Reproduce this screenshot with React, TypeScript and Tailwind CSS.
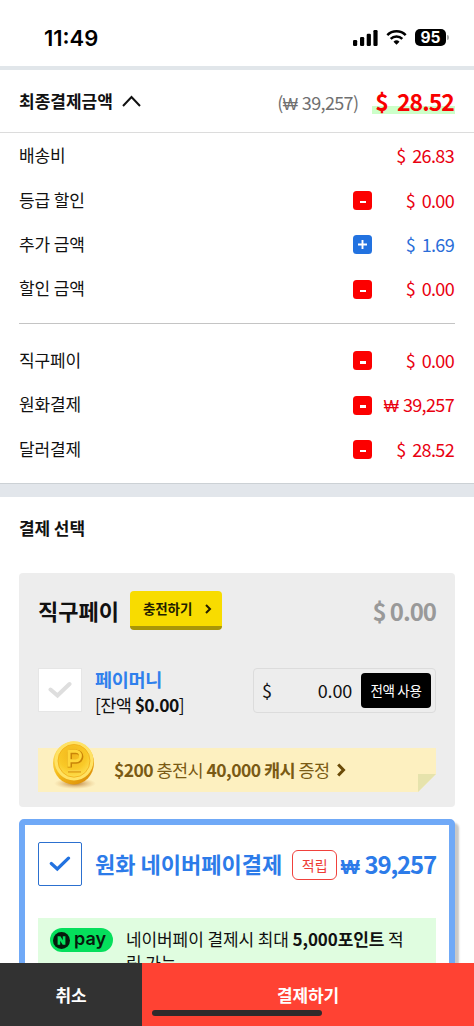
import React from 'react';

type Sign = 'minus' | 'plus' | null;

interface RowData {
  label: string;
  currency: string;
  value: string;
  sign: Sign;
}

const feeRows: RowData[] = [
  { label: '배송비', currency: '$', value: '26.83', sign: null },
  { label: '등급 할인', currency: '$', value: '0.00', sign: 'minus' },
  { label: '추가 금액', currency: '$', value: '1.69', sign: 'plus' },
  { label: '할인 금액', currency: '$', value: '0.00', sign: 'minus' },
];

const payRows: RowData[] = [
  { label: '직구페이', currency: '$', value: '0.00', sign: 'minus' },
  { label: '원화결제', currency: '₩', value: '39,257', sign: 'minus' },
  { label: '달러결제', currency: '$', value: '28.52', sign: 'minus' },
];

function SignBadge({ sign }: { sign: 'minus' | 'plus' }) {
  return sign === 'minus' ? (
    <span className="mt-[2px] flex h-[19px] w-[19px] items-center justify-center rounded-[3.5px] bg-[#fc0000]">
      <span className="mt-[3px] h-[2.5px] w-[6px] bg-white" />
    </span>
  ) : (
    <span className="mt-[2px] flex h-[19px] w-[19px] items-center justify-center rounded-[3.5px] bg-[#2272e0]">
      <svg width="11" height="11" viewBox="0 0 11 11" stroke="white" strokeWidth="1.9">
        <path d="M5.5 1v9M1 5.5h9" />
      </svg>
    </span>
  );
}

function Won({ className = '' }: { className?: string }) {
  return <span className={`font-['Liberation_Sans'] leading-none tracking-normal ${className}`}>₩</span>;
}

function AmountRow({ row }: { row: RowData }) {
  const color = row.sign === 'plus' ? 'text-[#2a6dd8]' : 'text-[#e90010]';
  return (
    <div className="flex h-[44.4px] items-center text-[17px] leading-[24px]">
      <span className="tracking-[-0.1px] text-[#111]">{row.label}</span>
      <span className="flex-1" />
      {row.sign && <SignBadge sign={row.sign} />}
      <span className={`flex w-[83px] items-baseline justify-end pr-[1px] text-[18px] ${color}`}>
        {row.currency === '$' ? <span className="mr-[6px]">$</span> : <Won className="mr-[4px] text-[16px]" />}
        <span className="tracking-[-0.65px]">{row.value}</span>
      </span>
    </div>
  );
}

function StatusBar() {
  return (
    <div className="flex h-[66px] shrink-0 items-center justify-between pl-[44px] pr-[25px] pt-[9px]">
      <span className="font-[Inter] text-[22px] font-semibold leading-none text-black">11:49</span>
      <div className="flex items-center">
        <svg width="25" height="16" viewBox="0 0 25 16" fill="black">
          <rect x="0" y="10" width="4.2" height="6" rx="1.2" />
          <rect x="7" y="7" width="4.2" height="9" rx="1.2" />
          <rect x="13.7" y="3.8" width="4.2" height="12.2" rx="1.2" />
          <rect x="20.4" y="0" width="4.2" height="16" rx="1.2" />
        </svg>
        <svg className="ml-[8px]" width="21" height="15" viewBox="0 0 22 16" fill="none" stroke="black" strokeWidth="2.7">
          <path d="M1.2 5.4a14 14 0 0 1 19.6 0" />
          <path d="M4.8 9.4a8.9 8.9 0 0 1 12.4 0" />
          <path d="M7.8 12.4a4.8 4.8 0 0 1 6.4 0L11 15.7Z" fill="black" stroke="none" />
        </svg>
        <span className="ml-[8px] flex h-[17px] w-[31px] items-center justify-center rounded-[5px] bg-black font-[Inter] text-[15.5px] font-bold leading-none text-white">
          95
        </span>
        <span className="ml-[1px] h-[5px] w-[2px] rounded-r-full bg-[#aaa]" />
      </div>
    </div>
  );
}

function Coin() {
  return (
    <svg className="absolute left-[12px] top-[-8px]" width="50" height="50" viewBox="0 0 50 50">
      <defs>
        <linearGradient id="rim" x1="0" y1="0" x2="0.9" y2="1">
          <stop offset="0" stopColor="#ffe77a" />
          <stop offset="0.45" stopColor="#f6bd1c" />
          <stop offset="1" stopColor="#d98a07" />
        </linearGradient>
        <radialGradient id="face" cx="0.45" cy="0.3" r="0.75">
          <stop offset="0" stopColor="#f2b61c" />
          <stop offset="0.6" stopColor="#f9c927" />
          <stop offset="1" stopColor="#ffe155" />
        </radialGradient>
        <radialGradient id="shade">
          <stop offset="0" stopColor="#a9671c" stopOpacity="0.85" />
          <stop offset="1" stopColor="#d9a55b" stopOpacity="0" />
        </radialGradient>
      </defs>
      <ellipse cx="25" cy="43.5" rx="21" ry="5.5" fill="url(#shade)" />
      <ellipse cx="23.5" cy="23" rx="20.5" ry="21.5" fill="url(#rim)" />
      <ellipse cx="24" cy="20.8" rx="19.5" ry="19.6" fill="#ffe264" />
      <ellipse cx="24" cy="20.8" rx="16" ry="16.4" fill="url(#face)" stroke="#f0ad18" strokeWidth="0.8" />
      <g fill="none" strokeLinejoin="round">
        <path d="M19.8 27.5V12h6.6a4.7 4.7 0 0 1 0 9.6h-6" stroke="#c98508" strokeWidth="4.4" />
        <path d="M19 26.8V11.2h6.6a4.7 4.7 0 0 1 0 9.6h-6" stroke="#ffd63a" strokeWidth="3" />
        <path d="M18 31.5h13" stroke="#d89510" strokeWidth="2" />
        <path d="M18 30.8h13" stroke="#ffdf55" strokeWidth="1" />
      </g>
    </svg>
  );
}

function PayMoneyCard() {
  return (
    <section className="mx-[19px] mt-[32px] h-[234px] shrink-0 rounded-[4px] bg-[#ededed] px-[19px] pt-[18px]">
      <div className="flex h-[39px] items-center">
        <span className="mb-[2px] text-[22px] font-bold leading-[36px] text-[#111]">직구페이</span>
        <button className="ml-[11px] flex h-[39px] w-[92px] items-center rounded-[4px] border-b-4 border-[#a89608] bg-[#f8dc00] pl-[13px] text-[13.5px] font-bold leading-none tracking-[-0.1px] text-[#221d00]">
          충전하기
          <svg className="ml-[13px]" width="7" height="10" viewBox="0 0 7 10" fill="none" stroke="#221d00" strokeWidth="2">
            <path d="M1 1l4 4-4 4" />
          </svg>
        </button>
        <span className="ml-auto text-[24px] font-bold leading-[38px] tracking-[-1px] text-[#999]">
          <span className="mr-[4px]">$</span>0.00
        </span>
      </div>
      <div className="mt-[38px] flex h-[45px]">
        <span className="flex h-[44px] w-[44px] items-center justify-center border border-[#e6e6e6] bg-white">
          <svg width="24" height="18" viewBox="0 0 24 18" fill="none" stroke="#dedede" strokeWidth="4" strokeLinecap="round">
            <path d="M2.5 8.5l7 6L21.5 3" />
          </svg>
        </span>
        <div className="ml-[13px] flex flex-col">
          <span className="mt-[-1px] text-[18.5px] font-bold leading-[25px] tracking-[-0.25px] text-[#2f80ec]">페이머니</span>
          <span className="whitespace-nowrap text-[17.5px] leading-[26px] tracking-[-0.6px] text-[#111]">
            [잔액 <b>$0.00</b>]
          </span>
        </div>
        <div className="ml-auto flex h-[45px] w-[183px] items-center rounded-[4px] border border-[#dcdcdc] pl-[8px] pr-[4px] text-[18px] text-[#111]">
          <span>$</span>
          <span className="ml-auto tracking-[-0.2px]">0.00</span>
          <button className="ml-[9px] h-[35px] w-[70px] whitespace-nowrap rounded-[4px] bg-black text-[13.5px] leading-none tracking-[-0.3px] text-white">
            전액 사용
          </button>
        </div>
      </div>
      <div className="relative mt-[35px] flex h-[44px] items-center bg-[#fdf0c0] pl-[76px] text-[17.5px] tracking-[-0.55px] text-[#7a5a14]">
        <Coin />
        <span className="whitespace-nowrap">
          <b>$200</b> 충전시 <b>40,000 캐시</b> 증정
        </span>
        <svg className="ml-[7px]" width="9" height="14" viewBox="0 0 9 14" fill="none" stroke="#6b4b08" strokeWidth="3">
          <path d="M1.2 1.5L6.5 7l-5.3 5.5" />
        </svg>
        <svg className="absolute bottom-0 right-0" width="18" height="18" viewBox="0 0 18 18">
          <path d="M18 0v18H0Z" fill="#ededed" />
          <path d="M0 0h18L0 18Z" fill="#e6e3ac" />
        </svg>
      </div>
    </section>
  );
}

function NaverPayCard() {
  return (
    <section className="mx-[19px] mt-[12px] h-[180px] shrink-0 rounded-[5px] border-[6px] border-[#70a9f7] bg-white px-[13px] pt-[17px] shadow-[4px_4px_2px_#c8c8c8]">
      <div className="flex h-[44px] items-center whitespace-nowrap">
        <span className="flex h-[44px] w-[44px] shrink-0 items-center justify-center rounded-[2px] border border-[#2c70cf]">
          <svg width="22" height="16" viewBox="0 0 22 16" fill="none" stroke="#2272e0" strokeWidth="3.2" strokeLinecap="round">
            <path d="M2.3 7.5l6 5.5L19.5 2.2" />
          </svg>
        </span>
        <span className="mb-[2px] ml-[13px] text-[22px] font-bold leading-[38px] text-[#2c7be9]">원화 네이버페이결제</span>
        <span className="ml-[10px] mt-[2px] flex h-[30px] w-[45px] shrink-0 items-center justify-center rounded-[6px] border border-[#f0413c] text-[14px] leading-none text-[#ee3b35]">
          적립
        </span>
        <span className="ml-auto flex items-baseline text-[24px] font-bold leading-[38px] tracking-[-1.2px] text-[#2c7be9]">
          <Won className="mr-[5px] text-[20px]" />
          39,257
        </span>
      </div>
      <div className="mt-[32px] flex h-[80px] bg-[#e0fde0] pl-[12px] pt-[10px]">
        <span className="flex h-[24px] w-[63px] shrink-0 items-center rounded-full bg-[#05df5c] pl-[3px]">
          <svg width="17" height="17" viewBox="0 0 17 17">
            <circle cx="8.5" cy="8.5" r="8.5" fill="#07190d" />
            <path d="M4.6 4.2h2.8l2.4 4V4.2h2.6v8.6H9.7L7.2 8.8v4H4.6Z" fill="#05df5c" />
          </svg>
          <span className="ml-[4px] mt-[-3px] font-[Inter] text-[18px] font-semibold leading-none text-[#07190d]">pay</span>
        </span>
        <p className="ml-[13px] mt-[-1px] whitespace-nowrap text-[17px] leading-[24px] tracking-[-0.1px] text-[#111]">
          네이버페이 결제시 최대 <b>5,000포인트</b> 적
          <br />립 가능
        </p>
      </div>
    </section>
  );
}

export default function App() {
  return (
    <main className="flex h-[1026px] w-[474px] flex-col overflow-hidden bg-white font-['Noto_Sans_CJK_KR',sans-serif]">
      <StatusBar />
      <div className="h-[4px] shrink-0 bg-[#e1e6ea]" />
      <header className="flex h-[63px] shrink-0 items-center border-b border-[#dcdcdc] px-[19px]">
        <span className="text-[17px] font-bold text-[#111]">최종결제금액</span>
        <svg className="ml-[9px]" width="19" height="12" viewBox="0 0 19 12" fill="none" stroke="#111" strokeWidth="2">
          <path d="M1 11l8.5-9L18 11" />
        </svg>
        <span className="ml-auto mt-[2px] flex items-baseline text-[18px] tracking-[-0.65px] text-[#707070]">
          (<Won className="mr-[4px] text-[16px]" />
          39,257)
        </span>
        <span className="ml-[14px] flex h-[26px] items-center bg-linear-to-b from-transparent from-70% to-[#ccffc9] to-70% pl-[3px] pr-[1px] text-[23px] font-bold leading-[26px] tracking-[-0.95px] text-[#f80000]">
          <span className="mr-[9px]">$</span>28.52
        </span>
      </header>
      <section className="flex h-[350px] shrink-0 flex-col px-[19px]">
        {feeRows.map((row) => (
          <AmountRow key={row.label} row={row} />
        ))}
        <div className="mb-[14px] mt-[12px] h-px shrink-0 bg-[#c4c4c4]" />
        {payRows.map((row) => (
          <AmountRow key={row.label} row={row} />
        ))}
      </section>
      <div className="h-[14px] shrink-0 border-t border-[#ccd1d5] bg-[#e2e6eb]" />
      <h2 className="mt-[18px] h-[26px] shrink-0 px-[19px] text-[17px] font-bold leading-[26px] tracking-[-0.1px] text-[#111]">결제 선택</h2>
      <PayMoneyCard />
      <NaverPayCard />
      <footer className="fixed left-0 top-[963px] flex h-[63px] w-[474px] text-[17px] font-bold tracking-[-0.1px] text-white">
        <button className="w-[142px] bg-[#323232]">취소</button>
        <button className="flex-1 bg-[#ff4233]">결제하기</button>
        <span className="absolute left-[152px] top-[47px] h-[6px] w-[170px] rounded-full bg-[#302a2b]" />
      </footer>
    </main>
  );
}
